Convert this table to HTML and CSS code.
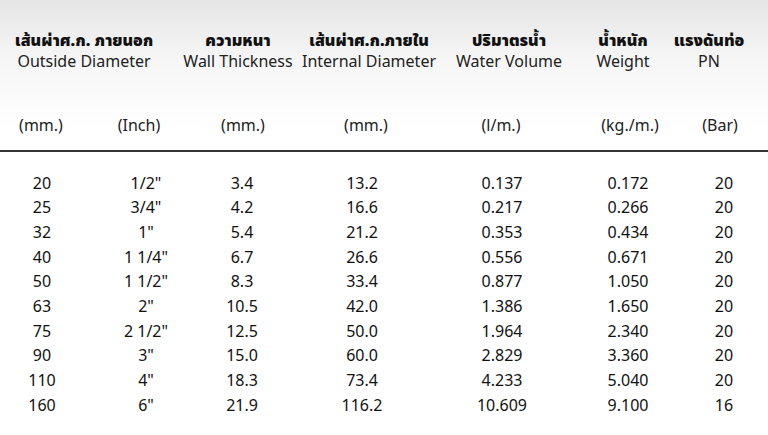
FILE: index.html
```html
<!DOCTYPE html>
<html lang="th">
<head>
<meta charset="utf-8">
<title>PE Pipe Specification</title>
<link rel="stylesheet" href="styles.css">
</head>
<body>
<div class="page">
  <div class="head">
    <div class="hcell"><div class="th">เส้นผ่าศ.ก. ภายนอก</div><div class="en">Outside Diameter</div></div>
    <div class="hcell"><div class="th">ความหนา</div><div class="en">Wall Thickness</div></div>
    <div class="hcell"><div class="th">เส้นผ่าศ.ก.ภายใน</div><div class="en">Internal Diameter</div></div>
    <div class="hcell"><div class="th">ปริมาตรน้ำ</div><div class="en">Water Volume</div></div>
    <div class="hcell"><div class="th">น้ำหนัก</div><div class="en">Weight</div></div>
    <div class="hcell"><div class="th">แรงดันท่อ</div><div class="en">PN</div></div>
  </div>
  <div class="grid units">
    <div>(mm.)</div><div>(Inch)</div><div>(mm.)</div><div>(mm.)</div><div>(l/m.)</div><div>(kg./m.)</div><div>(Bar)</div>
  </div>
  <div class="rule"></div>
  <div class="grid data">
    <div>20</div><div>1/2"</div><div>3.4</div><div>13.2</div><div>0.137</div><div>0.172</div><div>20</div>
    <div>25</div><div>3/4"</div><div>4.2</div><div>16.6</div><div>0.217</div><div>0.266</div><div>20</div>
    <div>32</div><div>1"</div><div>5.4</div><div>21.2</div><div>0.353</div><div>0.434</div><div>20</div>
    <div>40</div><div>1 1/4"</div><div>6.7</div><div>26.6</div><div>0.556</div><div>0.671</div><div>20</div>
    <div>50</div><div>1 1/2"</div><div>8.3</div><div>33.4</div><div>0.877</div><div>1.050</div><div>20</div>
    <div>63</div><div>2"</div><div>10.5</div><div>42.0</div><div>1.386</div><div>1.650</div><div>20</div>
    <div>75</div><div>2 1/2"</div><div>12.5</div><div>50.0</div><div>1.964</div><div>2.340</div><div>20</div>
    <div>90</div><div>3"</div><div>15.0</div><div>60.0</div><div>2.829</div><div>3.360</div><div>20</div>
    <div>110</div><div>4"</div><div>18.3</div><div>73.4</div><div>4.233</div><div>5.040</div><div>20</div>
    <div>160</div><div>6"</div><div>21.9</div><div>116.2</div><div>10.609</div><div>9.100</div><div>16</div>
  </div>
</div>
</body>
</html>
```

FILE: styles.css
```css
html, body {
  margin: 0;
  padding: 0;
}
body {
  width: 768px;
  height: 435px;
  overflow: hidden;
  background: linear-gradient(#e5e5e5 0px, #f6f6f6 60px, #ffffff 130px, #ffffff 100%);
  font-family: "Noto Sans", "Noto Sans Thai", "Open Sans", sans-serif;
  color: #151515;
}
.page {
  padding-top: 30px;
}
.head {
  display: grid;
  grid-template-columns: 168px 140px 122px 158px 70px 102px;
  justify-items: center;
}
.hcell {
  display: flex;
  flex-direction: column;
  align-items: center;
  white-space: nowrap;
}
.th {
  font-weight: 900;
  font-size: 16px;
  line-height: 21px;
  color: #111;
}
.en {
  font-size: 16px;
  line-height: 21px;
  color: #222;
}
.grid {
  display: grid;
  justify-items: center;
  white-space: nowrap;
  font-size: 16px;
}
.units {
  grid-template-columns: 82px 114px 94px 152px 118px 140px 40px;
  margin-top: 43px;
  line-height: 20px;
  color: #222;
}
.rule {
  margin-top: 15px;
  height: 2px;
  background: #333;
}
.data {
  grid-template-columns: 84px 124px 68px 172px 108px 144px 48px;
  padding-top: 18.6px;
  grid-auto-rows: 24.7px;
  line-height: 24.7px;
  color: #111;
}
```
